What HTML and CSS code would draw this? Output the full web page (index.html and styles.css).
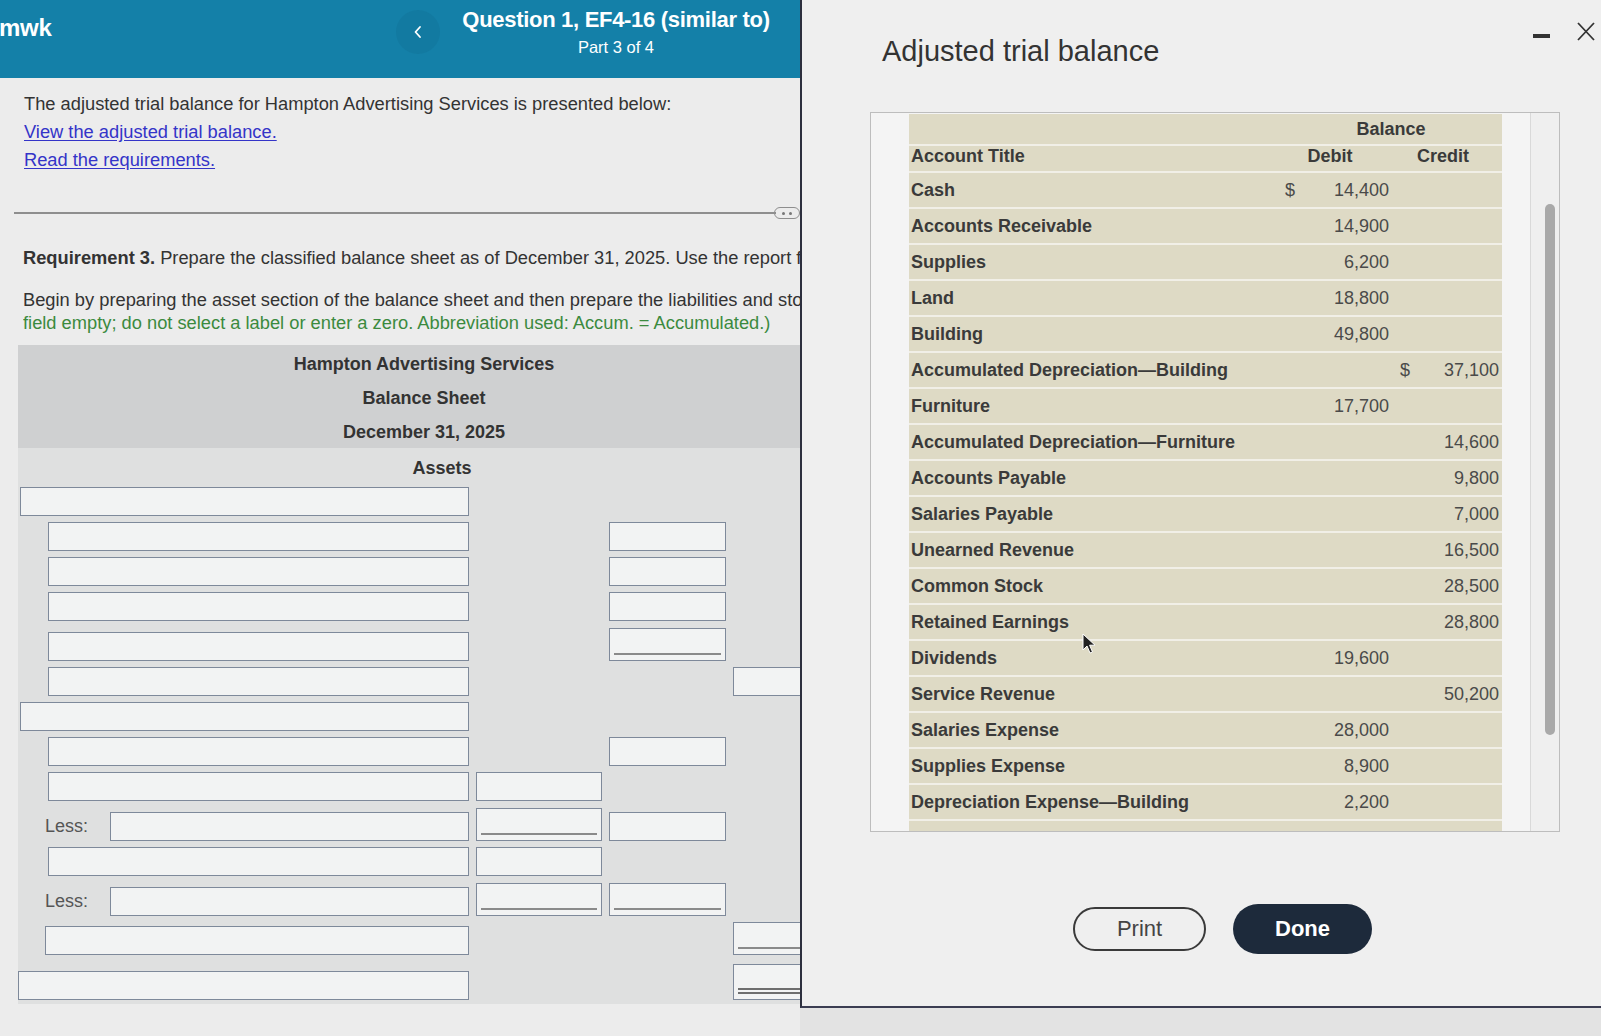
FILE: index.html
```html
<!DOCTYPE html>
<html lang="en">
<head>
<meta charset="utf-8">
<title>Question 1, EF4-16</title>
<link rel="stylesheet" href="styles.css">
</head>
<body>
<div class="screen">
  <section class="main">
    <header class="topbar">
      <div class="brand">mwk</div>
      <div class="back">
        <svg width="12" height="14" viewBox="0 0 12 14"><polyline points="8,2 3.5,7 8,12" fill="none" stroke="#ffffff" stroke-width="1.8" stroke-linecap="round" stroke-linejoin="round"/></svg>
      </div>
      <div class="qtitle">
        <div class="qname">Question 1, EF4-16 (similar to)</div>
        <div class="qpart">Part 3 of 4</div>
      </div>
    </header>
    <div class="content">
      <p class="intro">The adjusted trial balance for Hampton Advertising Services is presented below:</p>
      <a class="link" href="#">View the adjusted trial balance.</a>
      <a class="link" href="#">Read the requirements.</a>
      <div class="divider"><span class="rule"></span><span class="handle"><i></i><i></i></span></div>
      <p class="req"><b>Requirement 3.</b> Prepare the classified balance sheet as of December 31, 2025. Use the report format.</p>
      <p class="begin">Begin by preparing the asset section of the balance sheet and then prepare the liabilities and stockholders' equity section. <span class="hint">(If a box is not used in the table leave the</span><br><span class="hint">field empty; do not select a label or enter a zero. Abbreviation used: Accum. = Accumulated.)</span></p>

      <div class="sheet">
        <div class="sheet-head">
          <div>Hampton Advertising Services</div>
          <div>Balance Sheet</div>
          <div>December 31, 2025</div>
        </div>
        <div class="sheet-body">
          <div class="assets">Assets</div>

          <div class="row first"><div class="lab i0"><span class="box"></span></div></div>
          <div class="row"><div class="lab i1"><span class="box"></span></div><span class="box c2"></span></div>
          <div class="row"><div class="lab i1"><span class="box"></span></div><span class="box c2"></span></div>
          <div class="row"><div class="lab i1"><span class="box"></span></div><span class="box c2"></span></div>
          <div class="row m11"><div class="lab i1"><span class="box"></span></div><span class="box u c2"></span></div>
          <div class="row"><div class="lab i1"><span class="box"></span></div><span class="box c3"></span></div>
          <div class="row"><div class="lab i0"><span class="box"></span></div></div>
          <div class="row"><div class="lab i1"><span class="box"></span></div><span class="box c2"></span></div>
          <div class="row"><div class="lab i1"><span class="box"></span></div><span class="box c1"></span></div>
          <div class="row m11"><div class="lab less"><span class="lbl">Less:</span><span class="box"></span></div><span class="box u c1"></span><span class="box c2"></span></div>
          <div class="row"><div class="lab i1"><span class="box"></span></div><span class="box c1"></span></div>
          <div class="row m11"><div class="lab less"><span class="lbl">Less:</span><span class="box"></span></div><span class="box u c1"></span><span class="box u c2"></span></div>
          <div class="row m10"><div class="lab i1b"><span class="box"></span></div><span class="box u c3"></span></div>
          <div class="row m16"><div class="lab i00"><span class="box"></span></div><span class="box uu c3"></span></div>
        </div>
      </div>
    </div>
  </section>

  <section class="modal">
    <div class="modal-head">
      <h1 class="mtitle">Adjusted trial balance</h1>
      <div class="wctl">
        <span class="minbar"></span>
        <svg class="closex" width="20" height="21" viewBox="0 0 20 21"><path d="M2 2 L18 19 M18 2 L2 19" stroke="#333" stroke-width="1.8" fill="none"/></svg>
      </div>
    </div>

    <div class="frame">
      <div class="scroll">
        <table class="atb">
          <colgroup><col class="w-acct"><col class="w-dr"><col class="w-cr"></colgroup>
          <tr class="h1"><td></td><td colspan="2" class="bal">Balance</td></tr>
          <tr class="h2"><td class="acct">Account Title</td><td class="dh">Debit</td><td class="ch">Credit</td></tr>
          <tr><td class="acct">Cash</td><td class="dr"><div class="amt"><span class="cur">$</span><span class="num">14,400</span></div></td><td class="cr"></td></tr>
          <tr><td class="acct">Accounts Receivable</td><td class="dr"><div class="amt"><span class="num">14,900</span></div></td><td class="cr"></td></tr>
          <tr><td class="acct">Supplies</td><td class="dr"><div class="amt"><span class="num">6,200</span></div></td><td class="cr"></td></tr>
          <tr><td class="acct">Land</td><td class="dr"><div class="amt"><span class="num">18,800</span></div></td><td class="cr"></td></tr>
          <tr><td class="acct">Building</td><td class="dr"><div class="amt"><span class="num">49,800</span></div></td><td class="cr"></td></tr>
          <tr><td class="acct">Accumulated Depreciation—Building</td><td class="dr"></td><td class="cr"><div class="amt"><span class="cur">$</span><span class="num">37,100</span></div></td></tr>
          <tr><td class="acct">Furniture</td><td class="dr"><div class="amt"><span class="num">17,700</span></div></td><td class="cr"></td></tr>
          <tr><td class="acct">Accumulated Depreciation—Furniture</td><td class="dr"></td><td class="cr"><div class="amt"><span class="num">14,600</span></div></td></tr>
          <tr><td class="acct">Accounts Payable</td><td class="dr"></td><td class="cr"><div class="amt"><span class="num">9,800</span></div></td></tr>
          <tr><td class="acct">Salaries Payable</td><td class="dr"></td><td class="cr"><div class="amt"><span class="num">7,000</span></div></td></tr>
          <tr><td class="acct">Unearned Revenue</td><td class="dr"></td><td class="cr"><div class="amt"><span class="num">16,500</span></div></td></tr>
          <tr><td class="acct">Common Stock</td><td class="dr"></td><td class="cr"><div class="amt"><span class="num">28,500</span></div></td></tr>
          <tr><td class="acct">Retained Earnings</td><td class="dr"></td><td class="cr"><div class="amt"><span class="num">28,800</span></div></td></tr>
          <tr><td class="acct">Dividends</td><td class="dr"><div class="amt"><span class="num">19,600</span></div></td><td class="cr"></td></tr>
          <tr><td class="acct">Service Revenue</td><td class="dr"></td><td class="cr"><div class="amt"><span class="num">50,200</span></div></td></tr>
          <tr><td class="acct">Salaries Expense</td><td class="dr"><div class="amt"><span class="num">28,000</span></div></td><td class="cr"></td></tr>
          <tr><td class="acct">Supplies Expense</td><td class="dr"><div class="amt"><span class="num">8,900</span></div></td><td class="cr"></td></tr>
          <tr><td class="acct">Depreciation Expense—Building</td><td class="dr"><div class="amt"><span class="num">2,200</span></div></td><td class="cr"></td></tr>
          <tr><td class="acct"></td><td class="dr"></td><td class="cr"></td></tr>
        </table>
      </div>
      <div class="track"><div class="thumb"></div></div>
    </div>

    <div class="actions">
      <button class="btn print" type="button">Print</button>
      <button class="btn done" type="button">Done</button>
    </div>

    <svg class="cursor" width="14" height="22" viewBox="0 0 14 22"><path d="M1 1 L1 17 L5 13 L8 20 L10.5 19 L7.6 12.2 L13 12.2 Z" fill="#222" stroke="#fff" stroke-width="1"/></svg>
  </section>
</div>
</body>
</html>
```

FILE: styles.css
```css
html, body {
  margin: 0;
  padding: 0;
}
body {
  background: #e3e3e3;
  font-family: "Liberation Sans", Arial, Helvetica, sans-serif;
  color: #333;
}
.screen {
  display: flex;
  width: 1601px;
  height: 1036px;
  overflow: hidden;
}

/* ---------- left question panel ---------- */
.main {
  flex: none;
  width: 800px;
  height: 1036px;
  overflow: hidden;
  background: #ececec;
}
.topbar {
  height: 78px;
  background: #1480a8;
  display: grid;
  grid-template-columns: 396px 44px 352px;
  align-items: start;
  color: #fff;
}
.brand {
  font-size: 24px;
  font-weight: bold;
  line-height: 28px;
  margin-top: 14px;
  margin-left: -1px;
  letter-spacing: -0.3px;
}
.back {
  width: 44px;
  height: 44px;
  margin-top: 10px;
  border-radius: 50%;
  background: rgba(0, 40, 70, 0.07);
  display: flex;
  align-items: center;
  justify-content: center;
}
.qtitle {
  text-align: center;
  padding-top: 7px;
}
.qname {
  font-size: 22px;
  font-weight: bold;
  line-height: 26px;
  letter-spacing: -0.3px;
}
.qpart {
  font-size: 16.5px;
  line-height: 18px;
  margin-top: 5px;
}

.content {
  white-space: nowrap;
  font-size: 18.3px;
}
.intro {
  margin: 12px 0 0 24px;
  line-height: 28px;
  color: #333;
}
.link {
  display: block;
  margin-left: 24px;
  width: max-content;
  line-height: 28px;
  color: #3434c8;
  text-decoration: underline;
  text-underline-offset: 2px;
}
.divider {
  display: flex;
  align-items: center;
  height: 14px;
  margin: 32px 0 0 14px;
}
.rule {
  flex: 1;
  height: 2px;
  background: #8e8e8e;
}
.handle {
  flex: none;
  width: 26px;
  height: 12px;
  box-sizing: border-box;
  border: 1.5px solid #8e8e8e;
  border-radius: 7px;
  display: flex;
  align-items: center;
  justify-content: center;
  gap: 4px;
  margin-left: -2px;
}
.handle i {
  width: 3px;
  height: 3px;
  border-radius: 50%;
  background: #777;
}
.req, .begin {
  width: 777px;
  overflow: hidden;
}
.req {
  margin: 24px 0 0 23px;
  line-height: 28px;
  color: #333;
}
.begin {
  margin: 16px 0 0 23px;
  line-height: 23px;
  color: #333;
}
.hint {
  color: #3b8a3e;
}

/* balance sheet form */
.sheet {
  margin: 11px 0 0 18px;
  width: 782px;
  overflow: hidden;
}
.sheet-head {
  background: #cfd0d1;
  width: 812px;
  height: 103px;
  box-sizing: border-box;
  padding-top: 2px;
  text-align: center;
  font-size: 18px;
  font-weight: bold;
  line-height: 34px;
  color: #333;
}
.sheet-body {
  background: #dfe0e0;
  padding-bottom: 4px;
}
.assets {
  width: 812px;
  text-align: center;
  font-size: 18px;
  font-weight: bold;
  line-height: 28px;
  padding: 6px 0 0 36px;
  box-sizing: border-box;
  color: #333;
}
.row {
  display: grid;
  grid-template-columns: 451px 126px 117px 80px;
  grid-template-rows: 29px;
  column-gap: 7px;
  align-items: end;
  margin-top: 6px;
}
.row.first { margin-top: 5px; }
.row.m10 { margin-top: 10px; }
.row.m11 { margin-top: 11px; }
.row.m16 { margin-top: 16px; }
.lab {
  grid-column: 1;
  display: flex;
  align-items: center;
  height: 29px;
}
.lab .box { flex: 1; }
.i0 { padding-left: 2px; }
.i00 { padding-left: 0; }
.i1 { padding-left: 30px; }
.i1b { padding-left: 27px; }
.less { padding-left: 27px; }
.lbl {
  flex: none;
  width: 65px;
  color: #555;
  font-size: 18px;
}
.box {
  display: block;
  height: 29px;
  box-sizing: border-box;
  border: 1.5px solid #7e899a;
  background: #f2f3f3;
}
.c1 { grid-column: 2; }
.c2 { grid-column: 3; }
.c3 { grid-column: 4; }
.box.u {
  height: 33px;
  background: linear-gradient(#8a8a8a, #8a8a8a) no-repeat 4px calc(100% - 5px) / calc(100% - 8px) 2px, #f2f3f3;
}
.box.uu {
  height: 36px;
  background:
    linear-gradient(#6e6e6e, #6e6e6e) no-repeat 4px calc(100% - 5px) / calc(100% - 8px) 2px,
    linear-gradient(#6e6e6e, #6e6e6e) no-repeat 4px calc(100% - 9px) / calc(100% - 8px) 2px,
    #f2f3f3;
}

/* ---------- right modal ---------- */
.modal {
  flex: none;
  position: relative;
  width: 801px;
  height: 1008px;
  box-sizing: border-box;
  background: #efefef;
  border-left: 2px solid #2d2f3e;
  border-bottom: 2px solid #3b3d52;
}
.modal-head {
  display: flex;
  align-items: flex-start;
}
.mtitle {
  margin: 34px 0 0 80px;
  font-size: 29px;
  font-weight: normal;
  line-height: 34px;
  color: #333;
}
.wctl {
  margin-left: auto;
  margin-top: 21px;
  margin-right: 5px;
  display: flex;
  align-items: center;
  gap: 26px;
}
.minbar {
  width: 17px;
  height: 4px;
  background: #333;
  margin-top: 8px;
}
.frame {
  margin: 44px 0 0 68px;
  width: 690px;
  height: 720px;
  box-sizing: border-box;
  border: 1px solid #bdbdbd;
  background: #f4f4f4;
  display: flex;
  overflow: hidden;
}
.scroll {
  flex: 1;
  padding-left: 38px;
  padding-top: 1px;
  overflow: hidden;
}
.atb {
  width: 593px;
  table-layout: fixed;
  border-collapse: collapse;
  font-size: 18px;
  background: #dedac5;
}
.w-acct { width: 371px; }
.w-dr { width: 112px; }
.w-cr { width: 110px; }
.atb td {
  height: 34px;
  padding: 0;
  border-bottom: 2px solid #f1efe7;
  white-space: nowrap;
}
.atb tr.h1 td {
  height: 30px;
}
.atb tr.h2 td {
  height: 25px;
  vertical-align: top;
  line-height: 20px;
}
.bal {
  text-align: center;
  font-weight: bold;
  color: #3a3a3a;
}
.dh, .ch {
  text-align: center;
  font-weight: bold;
  color: #3a3a3a;
}
.atb td.dh { padding-right: 12px; }
.atb td.ch { padding-right: 8px; }
.atb td.acct {
  font-weight: bold;
  color: #3a3a3a;
  padding-left: 2px;
}
.atb td.dr { padding: 0 3px 0 5px; }
.atb td.cr { padding: 0 3px 0 8px; }
.amt {
  display: flex;
  color: #4a4a4a;
}
.num { margin-left: auto; }
.cur { color: #4a4a4a; }

.track {
  flex: none;
  width: 29px;
  box-sizing: border-box;
  border-left: 1px solid #d9d9d9;
  background: #efefef;
}
.thumb {
  width: 10px;
  height: 531px;
  margin: 91px 0 0 14px;
  border-radius: 5px;
  background: #a9a9a9;
}

.actions {
  display: flex;
  align-items: center;
  gap: 27px;
  margin: 72px 0 0 271px;
}
.btn {
  font-family: "Liberation Sans", Arial, Helvetica, sans-serif;
  font-size: 22px;
  cursor: pointer;
}
.print {
  width: 133px;
  height: 44px;
  border: 2px solid #3a3a3a;
  border-radius: 22px;
  background: transparent;
  color: #444;
}
.done {
  width: 139px;
  height: 50px;
  border: none;
  border-radius: 25px;
  background: #1d2a3b;
  color: #fff;
  font-weight: bold;
}
.cursor {
  position: absolute;
  left: 280px;
  top: 633px;
}
```
